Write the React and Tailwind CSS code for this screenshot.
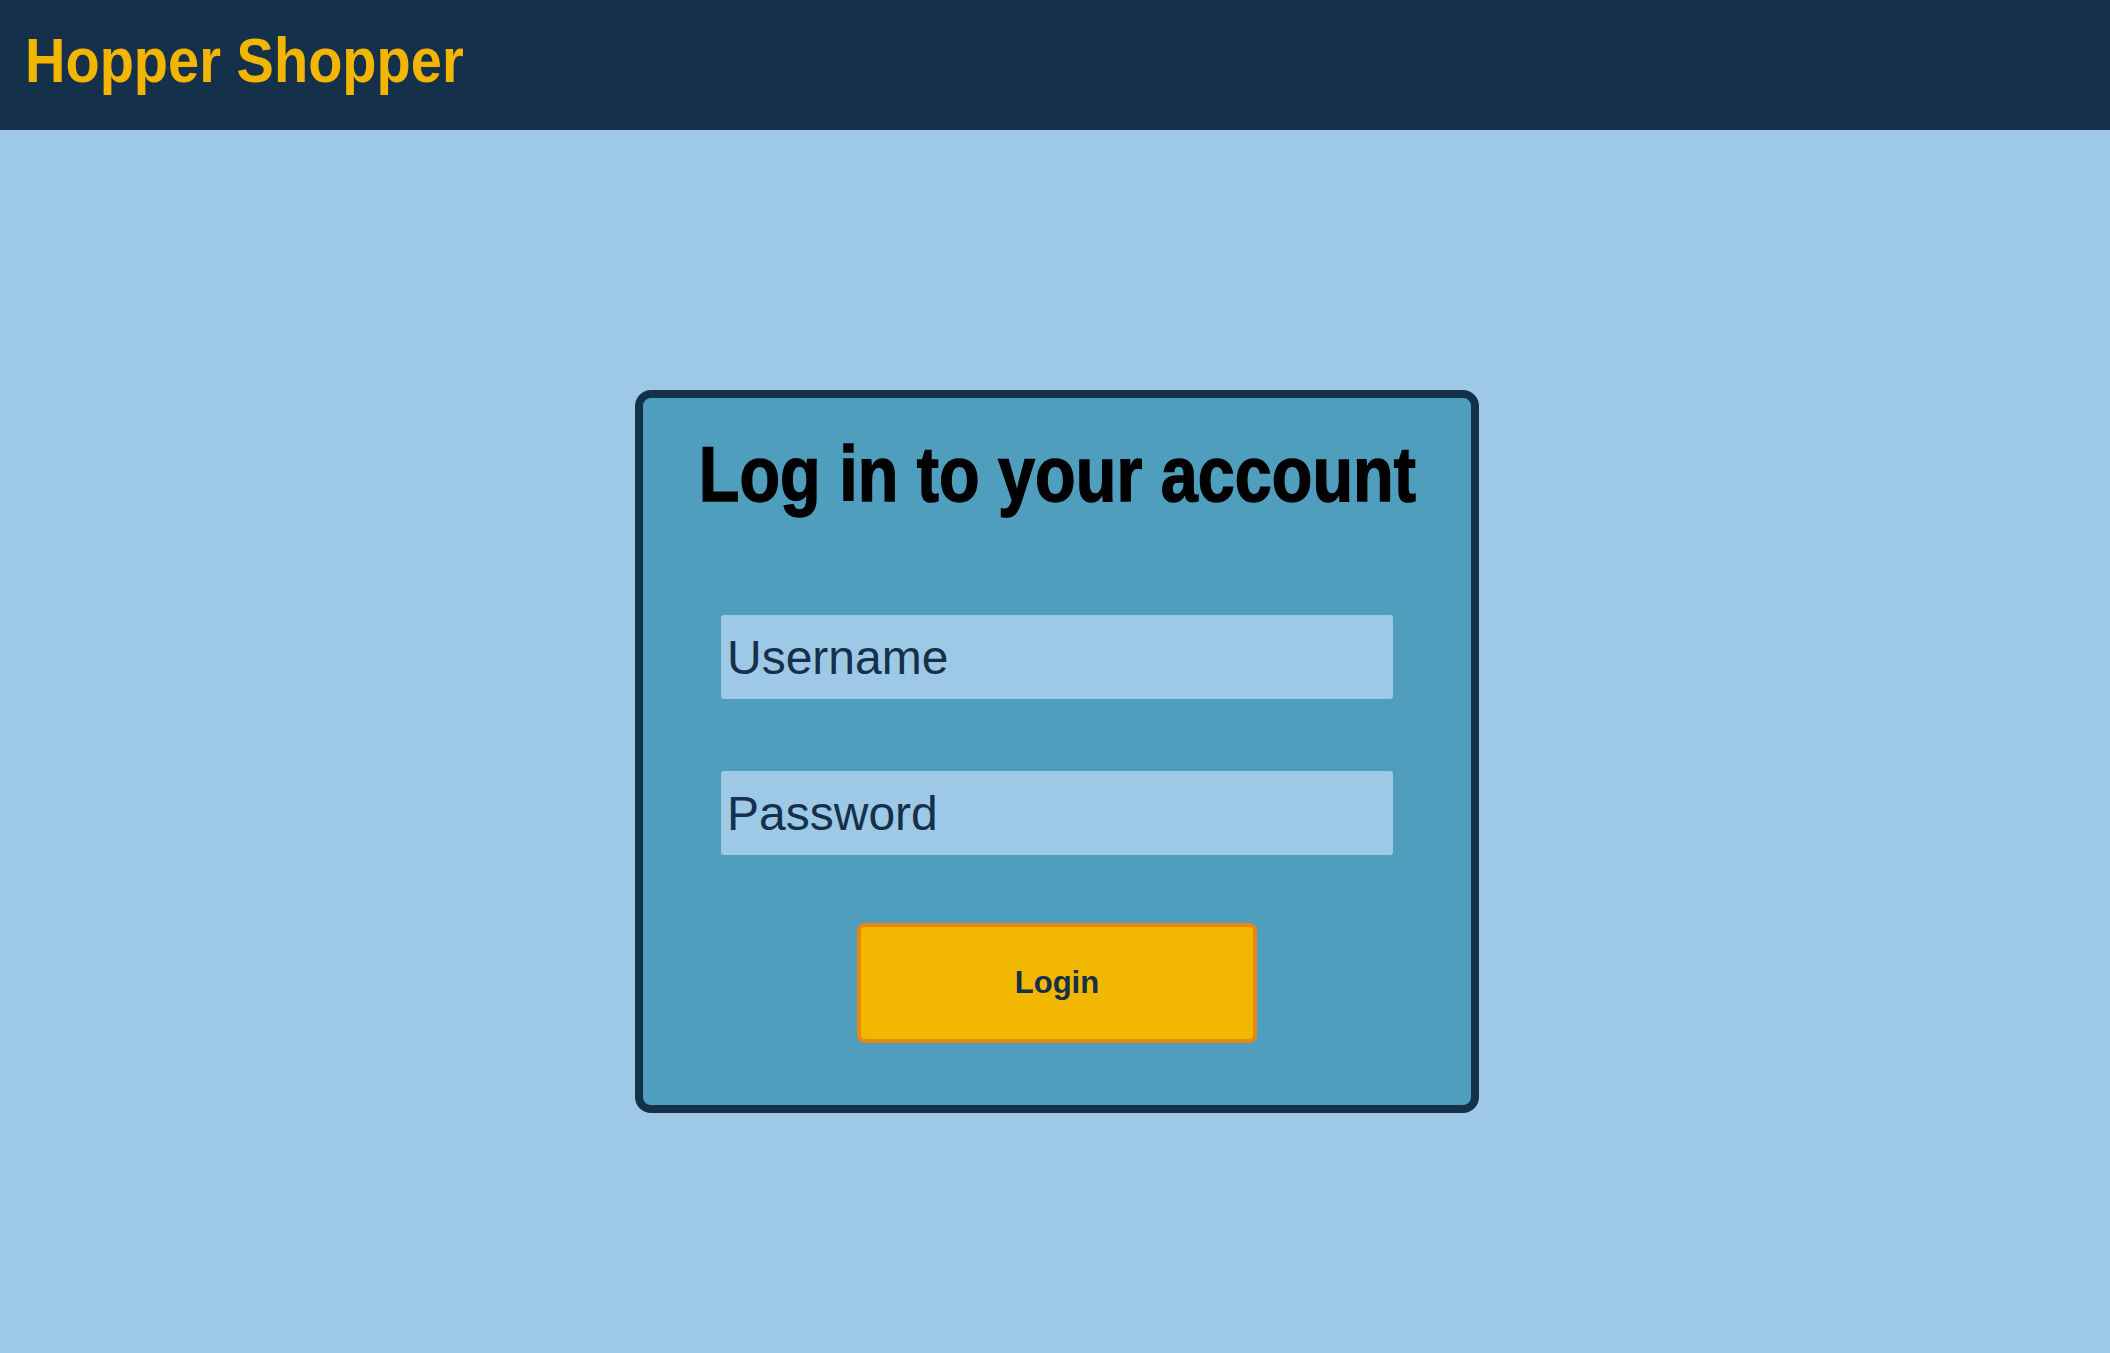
import React from "react";

export default function App() {
  return (
    <div className="min-h-[1353px] w-full bg-[#9dc9e7] font-['Liberation_Sans',Arial,sans-serif]">
      <header className="h-[130px] bg-[#15304a] pl-[25px] pt-[29px]">
        <h1 className="w-max origin-left scale-x-[0.889] whitespace-nowrap text-[63px] font-bold leading-none text-[#f2b600]">
          Hopper Shopper
        </h1>
      </header>
      <main className="flex justify-center pl-[4px] pt-[260px]">
        <div className="flex w-[844px] flex-col items-center rounded-[16px] border-[8px] border-[#15304a] bg-[#4f9ebd] pt-[37px] pb-[62px]">
          <h2 className="w-max scale-x-[0.853] whitespace-nowrap text-[78px] font-bold leading-none text-black [-webkit-text-stroke:1.5px_black]">
            Log in to your account
          </h2>
          <input
            type="text"
            placeholder="Username"
            className="mt-[102px] h-[84px] w-[672px] rounded-[3px] bg-[#9dc9e7] px-[6px] text-[48px] text-[#15304a] outline-none placeholder:text-[#15304a]"
          />
          <input
            type="password"
            placeholder="Password"
            className="mt-[72px] h-[84px] w-[672px] rounded-[3px] bg-[#9dc9e7] px-[6px] text-[48px] text-[#15304a] outline-none placeholder:text-[#15304a]"
          />
          <button
            type="button"
            className="mt-[68px] h-[120px] w-[400px] rounded-[8px] border-[4px] border-[#e8890b] bg-[#f2b700] text-[31px] font-bold text-[#15304a]"
          >
            Login
          </button>
        </div>
      </main>
    </div>
  );
}
